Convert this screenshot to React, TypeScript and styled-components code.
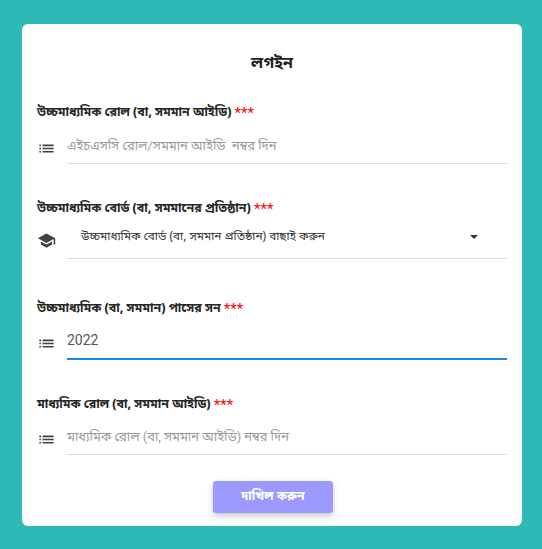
import styled, { createGlobalStyle } from "styled-components";

const Global = createGlobalStyle`
  html, body {
    margin: 0;
    padding: 0;
    height: 100%;
    background: #2eb8b6;
  }
  * {
    box-sizing: border-box;
  }
`;

const Page = styled.div`
  width: 542px;
  height: 549px;
  padding: 24px 20px 23px 22px;
  font-family: "Noto Sans Bengali", "Noto Sans", "Liberation Sans", sans-serif;
`;

const Card = styled.form`
  background: #fff;
  border-radius: 6px;
  height: 502px;
  padding: 29px 15px 0;
  display: flex;
  flex-direction: column;
`;

const Title = styled.h2`
  margin: 0 0 27px;
  height: 22px;
  line-height: 22px;
  font-size: 16px;
  font-weight: 700;
  text-align: center;
  color: #212121;
`;

const Field = styled.div<{ $height: number }>`
  height: ${(p) => p.$height}px;
`;

const Label = styled.div`
  height: 20px;
  padding-top: 1px;
  line-height: 20px;
  font-size: 12.4px;
  font-weight: 700;
  white-space: nowrap;
  color: #262626;
`;

const Stars = styled.span`
  color: #f00;
  font-family: Roboto, sans-serif;
  font-size: 15px;
  font-weight: 400;
  vertical-align: -2px;
`;

const Row = styled.div<{ $top: number }>`
  display: flex;
  align-items: stretch;
  margin-top: ${(p) => p.$top}px;
`;

const IconBox = styled.div<{ $shift: number }>`
  width: 30px;
  display: flex;
  align-items: center;
  padding-top: ${(p) => p.$shift}px;
  color: #424242;
`;

const Control = styled.div<{ $active?: boolean }>`
  flex: 1;
  height: 40px;
  border-bottom: ${(p) => (p.$active ? "2px solid #1e88e5" : "1px solid #dcdcdc")};
  display: flex;
  align-items: center;
`;

const SelectControl = styled(Control)`
  padding-bottom: 3px;
`;

const Input = styled.input`
  width: 100%;
  border: none;
  outline: none;
  padding: 2px 0 0;
  background: transparent;
  font-family: Roboto, "Noto Sans Bengali", "Noto Sans", sans-serif;
  font-size: 14px;
  color: #555;
  &::placeholder {
    color: #9a9a9a;
    opacity: 1;
    font-size: 12.9px;
  }
`;

const SelectText = styled.span`
  flex: 1;
  padding-left: 14px;
  font-size: 11.8px;
  color: #333;
  white-space: nowrap;
`;

const Caret = styled.span`
  width: 0;
  height: 0;
  margin-right: 29px;
  border-left: 4px solid transparent;
  border-right: 4px solid transparent;
  border-top: 4px solid #333;
`;

const Submit = styled.button`
  align-self: center;
  width: 120px;
  height: 32px;
  margin: 26px 0 0 2px;
  padding: 0;
  border: none;
  border-radius: 3px;
  background: #9c99ff;
  color: #fff;
  font-family: inherit;
  font-size: 12.4px;
  font-weight: 700;
  box-shadow: 0 3px 6px rgba(0, 0, 0, 0.22);
`;

function ListIcon() {
  return (
    <svg width="19" height="19" viewBox="0 0 24 24" fill="currentColor">
      <path d="M3 13h2v-2H3v2zm0 4h2v-2H3v2zm0-8h2V7H3v2zm4 4h14v-2H7v2zm0 4h14v-2H7v2zM7 7v2h14V7H7z" />
    </svg>
  );
}

function SchoolIcon() {
  return (
    <svg width="19" height="19" viewBox="0 0 24 24" fill="currentColor">
      <path d="M5 13.18v4L12 21l7-3.82v-4L12 17l-7-3.82zM12 3L1 9l11 6 9-4.91V17h2V9L12 3z" />
    </svg>
  );
}

export default function App() {
  return (
    <Page>
      <Global />
      <Card onSubmit={(e) => e.preventDefault()}>
        <Title>লগইন</Title>

        <Field $height={96}>
          <Label>
            উচ্চমাধ্যমিক রোল (বা, সমমান আইডি) <Stars>***</Stars>
          </Label>
          <Row $top={2}>
            <IconBox $shift={8}>
              <ListIcon />
            </IconBox>
            <Control>
              <Input placeholder="এইচএসসি রোল/সমমান আইডি  নম্বর দিন" />
            </Control>
          </Row>
        </Field>

        <Field $height={100}>
          <Label>
            উচ্চমাধ্যমিক বোর্ড (বা, সমমানের প্রতিষ্ঠান) <Stars>***</Stars>
          </Label>
          <Row $top={1}>
            <IconBox $shift={2}>
              <SchoolIcon />
            </IconBox>
            <SelectControl>
              <SelectText>উচ্চমাধ্যমিক বোর্ড (বা, সমমান প্রতিষ্ঠান) বাছাই করুন</SelectText>
              <Caret />
            </SelectControl>
          </Row>
        </Field>

        <Field $height={96}>
          <Label>
            উচ্চমাধ্যমিক (বা, সমমান) পাসের সন <Stars>***</Stars>
          </Label>
          <Row $top={2}>
            <IconBox $shift={6}>
              <ListIcon />
            </IconBox>
            <Control $active>
              <Input defaultValue="2022" />
            </Control>
          </Row>
        </Field>

        <Field $height={61}>
          <Label>
            মাধ্যমিক রোল (বা, সমমান আইডি) <Stars>***</Stars>
          </Label>
          <Row $top={1}>
            <IconBox $shift={8}>
              <ListIcon />
            </IconBox>
            <Control>
              <Input placeholder="মাধ্যমিক রোল (বা, সমমান আইডি) নম্বর দিন" />
            </Control>
          </Row>
        </Field>

        <Submit type="submit">দাখিল করুন</Submit>
      </Card>
    </Page>
  );
}
